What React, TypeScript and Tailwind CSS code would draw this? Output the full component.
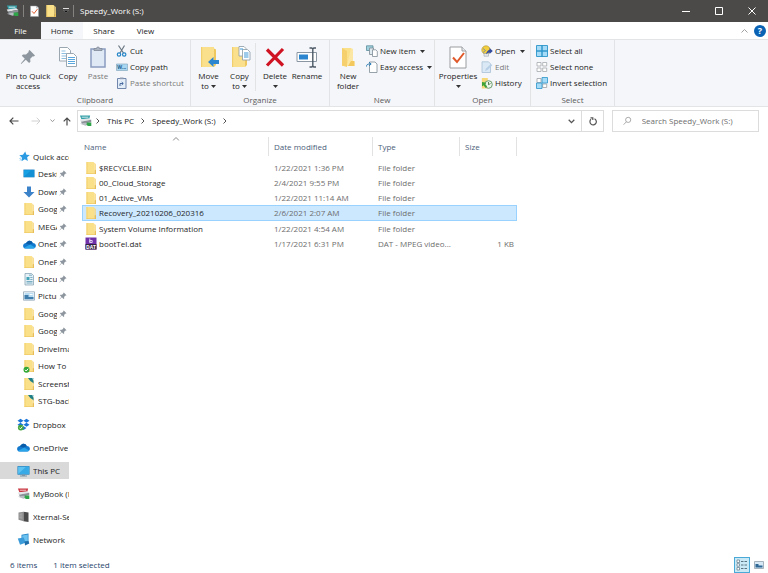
import { useState } from "react";
import type { ReactNode } from "react";
import clsx from "clsx";

type FileRow = {
  name: string;
  date: string;
  type: string;
  size: string;
};

type NavItem = {
  label: string;
  icon: ReactNode;
  pinned?: boolean;
};

const CaretIcon = () => (
  <svg viewBox="0 0 5 3" className="h-[3px] w-[5px] shrink-0" fill="#333">
    <path d="M0 0h5L2.5 3z" />
  </svg>
);

const FolderIcon = ({ children }: { children?: ReactNode }) => (
  <svg viewBox="0 0 12 14" className="h-3.5 w-3 shrink-0">
    <path d="M1.5 1h7l1 1v11h-8z" fill="#fbe08a" />
    <path d="M1.5 1h1v12h-1z" fill="#f3cf6b" />
    <path d="M9.5 9.500l1.500-1v4.500H1.500v-.6h8z" fill="#e9bf55" />
    <path d="M8.500 1l1 1v8l1.300-1.200V3z" fill="#f7d67a" />
    {children}
  </svg>
);

const TickFolderIcon = () => (
  <FolderIcon>
    <circle cx="3.500" cy="10.800" r="3" fill="#35a83a" />
    <path d="M2 10.800l1.200 1.200 2-2.300" stroke="#fff" strokeWidth="1" fill="none" />
  </FolderIcon>
);

const SyncFolderIcon = () => (
  <FolderIcon>
    <path d="M5 1h5.500v5.500L9 5 7.800 4.600 6.500 3z" fill="#1f7f88" />
    <path d="M9 1.200l1.800.2V4z" fill="#e8f5f5" />
  </FolderIcon>
);

const PinIcon = ({ className }: { className: string }) => (
  <svg viewBox="0 0 16 16" className={className}>
    <path
      d="M9.600 1l5.400 5.400-1.200 1-1-.2-2.600 2.600.2 3-1.300 1.200-3.300-3.300L1.200 15l-.4-.4 4-4.800L1.800 6.700 3 5.400l3 .2L8.700 3l-.2-1z"
      fill="#8d969e"
    />
  </svg>
);

const DriveIcon = ({ className, red }: { className: string; red?: boolean }) => (
  <svg viewBox="0 0 14 13" className={className}>
    <path d="M1 .5h11l-1 4H2.500z" fill={red ? "#c9343f" : "#35a0a8"} />
    <path d="M3 2.400h7" stroke="#fff" strokeWidth=".8" />
    <path d="M.8 5l10.200-1.400 2.200 1.600L2 7.200z" fill="#e3e6e9" />
    <path d="M2 7.200l11.200-2v2.600L3.500 9.800z" fill="#8c9298" />
    <path d="M1 9.500l6-1 5 1.200-5 2z" fill="#b8bec4" />
    <path d="M8.500 8h4.800v4H9.500L8 10.200z" fill="#2fa54a" />
  </svg>
);

const CloudIcon = () => (
  <svg viewBox="0 0 13 9" className="h-[9px] w-[13px] shrink-0">
    <path d="M4 2.300C5.200.3 8.600.2 9.700 3c2 0 3.200 1.300 3.200 2.800 0 1.600-1.200 2.700-2.700 2.700H3C1.300 8.500.1 7.500.1 5.900c0-1.500 1-2.500 2.300-2.700z" fill="#1279ce" />
    <path d="M4 2.300C5.200.3 8.600.2 9.700 3L6.800 4.800 2.400 3.200z" fill="#0b5ca8" />
    <path d="M1.200 7.800l6-3.300 5 3c-.6.700-1.200 1-2 1H3c-.8 0-1.300-.2-1.800-.7z" fill="#2aa5ea" />
  </svg>
);

const StarIcon = () => (
  <svg viewBox="0 0 12 12" className="h-[11px] w-[11px] shrink-0">
    <path d="M6.800.5l1.300 3.600 3.700.3-2.900 2.400.7 4.200-3.300-1.900-3.600 2 .7-3.900L.3 4.700l4-.6z" fill="#2a9be2" />
    <path d="M.5 8.200l2.500-.9M.8 10l2-.8" stroke="#6bbcee" strokeWidth=".8" />
  </svg>
);

const MonitorIcon = ({ small }: { small?: boolean }) => (
  <svg viewBox="0 0 13 12" className={small ? "h-3 w-3 shrink-0" : "h-3 w-[13px] shrink-0"}>
    <path d="M.5 1.200h12v8.400H.5z" fill="#0c78bd" />
    <path d="M1.100 1.800h10.800v7.200H1.100z" fill={small ? "#16a0e4" : "#5fc3f2"} />
    <path d="M1.100 9L9 1.800h2.900V9z" fill={small ? "#138fd3" : "#38aae5"} />
    {!small && <path d="M5 9.600h3v1h2v.8H3v-.8h2z" fill="#7d97a8" />}
  </svg>
);

const DownloadIcon = () => (
  <svg viewBox="0 0 12 12" className="h-3 w-3 shrink-0">
    <path d="M4 .5h4V6h3.500L6 11.500.500 6H4z" fill="#3b82c9" />
  </svg>
);

const DocumentsIcon = () => (
  <svg viewBox="0 0 12 14" className="h-3.5 w-3 shrink-0">
    <path d="M2 1.500h6.500L10.500 3.500V13H2z" fill="#e5f1f7" stroke="#7c9cae" strokeWidth=".7" />
    <path d="M3.500 5h3v3h-3z" fill="#41a3b8" />
    <path d="M6 3.200h3M7.300 5.500H9.500M7.300 7.500H9.500M3.500 9.500h6M3.500 11h6" stroke="#5e9db5" strokeWidth=".8" />
  </svg>
);

const PicturesIcon = () => (
  <svg viewBox="0 0 12 10" className="h-2.5 w-3 shrink-0">
    <path d="M.5.8h11v8.400H.5z" fill="#fff" stroke="#8fa5b5" strokeWidth=".8" />
    <path d="M1.500 1.800h9v6.400h-9z" fill="#b9dcf2" />
    <path d="M1.500 4h4v2h5v2.200h-9z" fill="#3f7dac" />
    <path d="M6.500 3.500h3" stroke="#fff" />
  </svg>
);

const DropboxIcon = () => (
  <svg viewBox="0 0 13 13" className="h-[13px] w-[13px] shrink-0">
    <path d="M3.500.8l3 2-3 2-3-2zM9.500.8l3 2-3 2-3-2zM3.500 4.800l3 2-3 2-3-2zM9.500 4.800l3 2-3 2-3-2zM6.500 8.300l3 1.800-3 2-3-2z" fill="#1a76d8" />
    <circle cx="3.800" cy="9.600" r="2.900" fill="#43a63c" />
    <path d="M2.400 9.600l1.100 1.200 1.800-2.200" stroke="#fff" strokeWidth=".9" fill="none" />
  </svg>
);

const ExternalDriveIcon = () => (
  <svg viewBox="0 0 13 13" className="h-[13px] w-[13px] shrink-0">
    <path d="M1.500 2.500l5-.8v9.600l-5-1.500z" fill="#8e8e8e" />
    <path d="M6.500 1.700l5 .8v9.500l-5-.7z" fill="#4a4a4a" />
    <path d="M2.400 4.300l3-.3M2.400 6l3 0M2.400 7.700l3 .4" stroke="#c4c4c4" strokeWidth=".6" />
  </svg>
);

const NetworkIcon = () => (
  <svg viewBox="0 0 13 13" className="h-[13px] w-[13px] shrink-0">
    <path d="M4.500 1.800l7-1.300v8.300l-7 .9z" fill="#2587c9" />
    <path d="M5.200 2.400l5.600-1v6.900l-5.600.7z" fill="#6cc2ef" />
    <path d="M.8 5.500l6-1 1.700 5.200L3 11.800z" fill="#3a9bd8" />
    <path d="M7.500 8.500l4-.6.8 2.600-4.300 2z" fill="#1d6da8" />
  </svg>
);

const DatFileIcon = () => (
  <svg viewBox="0 0 12 13" className="h-[13px] w-3 shrink-0">
    <path d="M.5.5h11v12H.5z" fill="#7030a8" />
    <path d="M.5 7h11v5.500H.5z" fill="#32203f" />
    <path d="M4.800 1.500v4M4.800 3.500h2.400v2H4.800z" stroke="#eadcf7" strokeWidth=".9" fill="none" />
    <text x="6" y="11.500" textAnchor="middle" fontSize="5" fontWeight="700" fill="#fff">
      DAT
    </text>
  </svg>
);

const CheckPageIcon = ({ className }: { className: string }) => (
  <svg viewBox="0 0 18 24" className={className}>
    <path d="M1 2h12l4 4v17H1z" fill="#fff" stroke="#9a9da1" />
    <path d="M13 2v4h4" fill="#e9ebee" stroke="#9a9da1" />
    <path d="M4 12.500l4 4.500 7-9" stroke="#e0592b" strokeWidth="2" fill="none" />
  </svg>
);

const CopyIcon = () => (
  <svg viewBox="0 0 20 24" className="h-6 w-5">
    <path d="M1.500 2.500h8l3 3V16h-11z" fill="#fff" stroke="#9aa7b0" />
    <path d="M3.500 6h4M3.500 8.500h7M3.500 11h7M3.500 13.500h5" stroke="#8fc0e2" />
    <path d="M8.500 8.500h7l3 3v10h-10z" fill="#fff" stroke="#9aa7b0" />
    <path d="M10 12.500h7M10 14.500h7M10 16.500h7M10 18.500h7" stroke="#5aa7de" />
  </svg>
);

const PasteIcon = () => (
  <svg viewBox="0 0 18 24" className="h-6 w-[18px]">
    <path d="M2 4h14v18H2z" fill="#dfe9f6" stroke="#8b9cc0" strokeWidth="1.500" />
    <path d="M5 5.500V3.500h2.500a1.500 1.500 0 013 0H13v2z" fill="#a9b2bf" stroke="#7f8897" strokeWidth=".8" />
  </svg>
);

const LargeFolder = ({ children }: { children?: ReactNode }) => (
  <svg viewBox="0 0 22 24" className="h-6 w-[22px]">
    <path d="M3 2h13v20H3z" fill="#fae08d" />
    <path d="M16 3.500l2 1V20l-2 2z" fill="#eec85f" />
    <path d="M3 2h1.200v20H3z" fill="#f1cf6e" />
    {children}
  </svg>
);

const MoveToIcon = () => (
  <LargeFolder>
    <path d="M10 17l5.500-5v3H21v4h-5.500v3z" fill="#2c85cf" />
  </LargeFolder>
);

const CopyToIcon = () => (
  <LargeFolder>
    <path d="M10 1.500h5l2 2V11h-7z" fill="#fff" stroke="#8c9aa5" strokeWidth=".8" />
    <path d="M13.500 4.500h5l2.500 2.500v8h-7.500z" fill="#fff" stroke="#8c9aa5" strokeWidth=".8" />
    <path d="M15 8h4.500M15 10h4.500M15 12h4.500M11 4h3" stroke="#3f97d6" />
  </LargeFolder>
);

const DeleteIcon = () => (
  <svg viewBox="0 0 20 24" className="h-6 w-5">
    <path d="M2 4.500l16 16M18 4L2 20.500" stroke="#cf1322" strokeWidth="3.200" />
  </svg>
);

const RenameIcon = () => (
  <svg viewBox="0 0 22 24" className="h-6 w-[22px]">
    <path d="M1 7.500h19.500v9H1z" fill="#fff" stroke="#8a97a3" />
    <path d="M3 9.500h9v5H3z" fill="#2c85cf" />
    <path d="M13.500 3h2.300l1 1 1-1h2.200M16.800 4v17M13.500 22h2.300l1-1 1 1h2.200" stroke="#4d5a66" strokeWidth="1.400" fill="none" />
  </svg>
);

const NewFolderIcon = () => (
  <svg viewBox="0 0 18 24" className="h-6 w-[18px]">
    <path d="M3 3h9v18H3z" fill="#fbe08a" />
    <path d="M3 3l5 3v16l-5-1.500z" fill="#f6d06c" />
    <path d="M12 3l2 1v12l1.500 1.500V21H8z" fill="#fbe6a3" />
    <path d="M12 16h3.500v5H9z" fill="#f3c95e" />
  </svg>
);

const CutIcon = () => (
  <svg viewBox="0 0 12 12" className="h-3 w-3">
    <path d="M2.500.5l5 7.500M8.500.5L4 8" stroke="#6a7884" strokeWidth="1.200" />
    <circle cx="3" cy="9.500" r="1.700" fill="none" stroke="#2585c8" strokeWidth="1.200" />
    <circle cx="8.200" cy="9.500" r="1.700" fill="none" stroke="#2585c8" strokeWidth="1.200" />
  </svg>
);

const CopyPathIcon = () => (
  <svg viewBox="0 0 12 12" className="h-3 w-3">
    <path d="M.5 3h11v6.500H.5z" fill="#a9d6f1" stroke="#86a9c0" strokeWidth=".7" />
    <text x="1.200" y="8.200" fontSize="5" fontWeight="700" fill="#1d5c8c">
      W...
    </text>
  </svg>
);

const PasteShortcutIcon = () => (
  <svg viewBox="0 0 12 12" className="h-3 w-3">
    <path d="M1.500 1.500h8.500v10H1.500z" fill="#e3edf8" stroke="#7086ad" />
    <path d="M4 .5h3.500v1.700H4z" fill="#8f9bb0" />
    <path d="M4 9V6.500h3M5.700 5l1.600 1.500L5.700 8" stroke="#47699f" fill="none" />
  </svg>
);

const NewItemIcon = () => (
  <svg viewBox="0 0 12 12" className="h-3 w-3">
    <path d="M.5.8h6.500v4.700H.5z" fill="#9fd0dd" stroke="#5c8b9b" strokeWidth=".8" />
    <path d="M3.500 3h4v6.500h-4z" fill="#dfe9f0" stroke="#7d8b96" strokeWidth=".8" />
    <path d="M6.500 4.800h3.200l1.600 1.500v5.200H6.500z" fill="#fff" stroke="#7d8b96" strokeWidth=".8" />
  </svg>
);

const EasyAccessIcon = () => (
  <svg viewBox="0 0 12 12" className="h-3 w-3">
    <path d="M3.500 1h5.500l2 2v8.500H3.500z" fill="#fff" stroke="#7d8b96" strokeWidth=".8" />
    <path d="M.5 5.500c0-1.800 1-2.500 3-2.500M3 1.200L5.200 3 3 4.800" stroke="#2a7db5" fill="none" />
  </svg>
);

const OpenIcon = () => (
  <svg viewBox="0 0 12 12" className="h-3 w-3">
    <circle cx="5" cy="5" r="4.200" fill="#f4cf3d" stroke="#a99132" strokeWidth=".6" />
    <path d="M2 3.500l2.500 2L2 7.500" stroke="#84929c" fill="none" />
    <path d="M3 8.500h4.500v2.700H3z" fill="#e6e9ec" stroke="#8994a0" strokeWidth=".5" />
    <path d="M5 9.500c.5-3 2-4.500 3.500-4.800V3L11.800 6 8.500 9V7.500C7 7.500 6 8.200 5 9.500z" fill="#344b9e" />
  </svg>
);

const EditIcon = () => (
  <svg viewBox="0 0 12 12" className="h-3 w-3">
    <path d="M1 .8h6.500l2 2V11.500H1z" fill="#dbe9f6" stroke="#a9c0d6" strokeWidth=".8" />
    <path d="M4 10l1-2.500L10 3l1.300 1.300L6.500 9z" fill="#b7cfe6" />
  </svg>
);

const HistoryIcon = () => (
  <svg viewBox="0 0 12 12" className="h-3 w-3">
    <path d="M.8 1h6v10.500h-6z" fill="#f6d879" />
    <circle cx="7.500" cy="7.500" r="3.800" fill="#eaf6e8" stroke="#6f9c70" />
    <path d="M7.500 5v2.700l2-1.200" stroke="#355f31" strokeWidth=".8" fill="none" />
    <path d="M1 5l4.500.8-1.300 1.300 2 2.500-1.700 1.200-2-2.600L1 9.500z" fill="#3da336" />
  </svg>
);

const SelectAllIcon = () => (
  <svg viewBox="0 0 12 12" className="h-3 w-3" fill="#a5dbf6" stroke="#2b94c9" strokeWidth=".9">
    <path d="M.5.5H6v5.500H.5zM6 .5h5.500v5.500H6zM.5 6H6v5.500H.5zM6 6h5.500v5.500H6z" />
  </svg>
);

const SelectNoneIcon = () => (
  <svg viewBox="0 0 12 12" className="h-3 w-3" fill="#fff" stroke="#9b9fa3" strokeWidth=".7">
    <path d="M1 1.500h4v3.500H1zM6.700 1.500h4v3.500h-4zM1 7h4v3.500H1zM6.700 7h4v3.500h-4z" />
  </svg>
);

const InvertIcon = () => (
  <svg viewBox="0 0 12 12" className="h-3 w-3" strokeWidth=".8">
    <path d="M1 1.500h4v4H1zM6.700 7h4v3.500h-4z" fill="#fff" stroke="#9b9fa3" />
    <path d="M6 .5h5.500v5.500H6zM.5 6H6v5.500H.5z" fill="#a5dbf6" stroke="#2b94c9" />
  </svg>
);

const quickAccess: NavItem[] = [
  { label: "Desktop", icon: <MonitorIcon small />, pinned: true },
  { label: "Downloads", icon: <DownloadIcon />, pinned: true },
  { label: "Google Drive", icon: <FolderIcon />, pinned: true },
  { label: "MEGA", icon: <FolderIcon />, pinned: true },
  { label: "OneDrive", icon: <CloudIcon />, pinned: true },
  { label: "OneFile", icon: <FolderIcon />, pinned: true },
  { label: "Documents", icon: <DocumentsIcon />, pinned: true },
  { label: "Pictures", icon: <PicturesIcon />, pinned: true },
  { label: "Google Docs", icon: <FolderIcon />, pinned: true },
  { label: "Google Photos", icon: <FolderIcon />, pinned: true },
  { label: "DriveImages", icon: <FolderIcon /> },
  { label: "How To", icon: <TickFolderIcon /> },
  { label: "Screenshots", icon: <SyncFolderIcon /> },
  { label: "STG-backups", icon: <SyncFolderIcon /> },
];

const locations: NavItem[] = [
  { label: "Dropbox", icon: <DropboxIcon /> },
  { label: "OneDrive", icon: <CloudIcon /> },
  { label: "This PC", icon: <MonitorIcon /> },
  { label: "MyBook (M:)", icon: <DriveIcon red className="h-3 w-[13px] shrink-0" /> },
  { label: "Xternal-Seagate", icon: <ExternalDriveIcon /> },
  { label: "Network", icon: <NetworkIcon /> },
];

const files: FileRow[] = [
  { name: "$RECYCLE.BIN", date: "1/22/2021 1:36 PM", type: "File folder", size: "" },
  { name: "00_Cloud_Storage", date: "2/4/2021 9:55 PM", type: "File folder", size: "" },
  { name: "01_Active_VMs", date: "1/22/2021 11:14 AM", type: "File folder", size: "" },
  { name: "Recovery_20210206_020316", date: "2/6/2021 2:07 AM", type: "File folder", size: "" },
  { name: "System Volume Information", date: "1/22/2021 4:54 AM", type: "File folder", size: "" },
  { name: "bootTel.dat", date: "1/17/2021 6:31 PM", type: "DAT - MPEG video...", size: "1 KB" },
];

const RibbonGroup = ({
  label,
  className,
  children,
}: {
  label: string;
  className: string;
  children: ReactNode;
}) => (
  <section className={clsx("flex shrink-0 flex-col border-r border-[#e2e3e5]", className)}>
    <div className="flex flex-1 items-start pt-[3px]">{children}</div>
    <h2 className="text-center leading-3 text-[#5a5a5a]">{label}</h2>
  </section>
);

const BigButton = ({
  lines,
  icon,
  className,
  caret,
  disabled,
}: {
  lines: string[];
  icon: ReactNode;
  className: string;
  caret?: boolean;
  disabled?: boolean;
}) => (
  <button
    disabled={disabled}
    className={clsx(
      "flex shrink-0 flex-col items-center whitespace-nowrap leading-[10px]",
      disabled && "text-[#7a7a7a]",
      className
    )}
  >
    <span className="flex h-7 items-center">{icon}</span>
    <span>{lines[0]}</span>
    <span className="flex h-2.5 items-center gap-0.5">
      {lines[1]}
      {caret && <CaretIcon />}
    </span>
  </button>
);

const SmallButton = ({
  label,
  icon,
  caret,
  disabled,
}: {
  label: string;
  icon: ReactNode;
  caret?: boolean;
  disabled?: boolean;
}) => (
  <button
    disabled={disabled}
    className={clsx(
      "flex h-4 items-center whitespace-nowrap",
      disabled && "text-[#7a7a7a]"
    )}
  >
    {icon}
    <span className="mr-1 ml-0.5">{label}</span>
    {caret && <CaretIcon />}
  </button>
);

const TitleBar = () => (
  <header className="flex h-[22px] items-center bg-[#4b4a48] pl-1.5 text-white">
    <DriveIcon className="h-3 w-[13px]" />
    <span className="ml-1 h-3 border-l border-[#85837f]" />
    <button aria-label="Properties" className="ml-1.5">
      <CheckPageIcon className="h-3 w-[9px]" />
    </button>
    <button aria-label="New folder" className="ml-1.5">
      <FolderIcon />
    </button>
    <button aria-label="Customize toolbar" className="ml-1.5">
      <svg viewBox="0 0 6 6" className="h-1.5 w-1.5">
        <path d="M0 .5h6" stroke="#ddd" />
        <path d="M.5 2.500h5L3 5z" fill="#111" stroke="#bbb" strokeWidth=".3" />
      </svg>
    </button>
    <span className="ml-1 h-3 border-l border-[#85837f]" />
    <h1 className="ml-1.5 flex-1">Speedy_Work (S:)</h1>
    <button aria-label="Minimize" className="flex w-[33px] justify-center">
      <svg viewBox="0 0 8 8" className="h-2 w-2" stroke="#fff">
        <path d="M0 4.500h8" />
      </svg>
    </button>
    <button aria-label="Maximize" className="flex w-[33px] justify-center">
      <svg viewBox="0 0 8 8" className="h-2 w-2" stroke="#fff" fill="none">
        <path d="M.5.5h7v7h-7z" />
      </svg>
    </button>
    <button aria-label="Close" className="flex w-[33px] justify-center">
      <svg viewBox="0 0 8 8" className="h-2 w-2" stroke="#fff">
        <path d="M.5.5l7 7M7.500.5l-7 7" />
      </svg>
    </button>
  </header>
);

const Tabs = () => (
  <nav className="flex h-[17px] items-stretch bg-white">
    <button className="w-[41px] bg-[#4b4a48] text-white">File</button>
    <button className="w-[42px] bg-[#f5f6f9]">Home</button>
    <button className="w-[42px]">Share</button>
    <button className="w-[41px]">View</button>
    <div className="ml-auto flex items-center gap-1.5 pr-0.5">
      <button aria-label="Minimize the ribbon">
        <svg viewBox="0 0 7 4" className="h-1 w-[7px]" stroke="#a0a0a0" fill="none">
          <path d="M.5 3.500l3-3 3 3" />
        </svg>
      </button>
      <button
        aria-label="Help"
        className="flex h-3 w-3 items-center justify-center rounded-full bg-[#0a62b5] text-[9px] font-bold text-white"
      >
        ?
      </button>
    </div>
  </nav>
);

const Ribbon = () => (
  <div className="flex h-[68px] overflow-hidden border-y border-[#e3e4e6] bg-[#f5f6f9]">
    <RibbonGroup label="Clipboard" className="w-[191px]">
      <BigButton className="w-14" lines={["Pin to Quick", "access"]} icon={<PinIcon className="h-4 w-4" />} />
      <BigButton className="w-6" lines={["Copy"]} icon={<CopyIcon />} />
      <BigButton className="w-9" lines={["Paste"]} icon={<PasteIcon />} disabled />
      <div className="flex flex-col">
        <SmallButton label="Cut" icon={<CutIcon />} />
        <SmallButton label="Copy path" icon={<CopyPathIcon />} />
        <SmallButton label="Paste shortcut" icon={<PasteShortcutIcon />} disabled />
      </div>
    </RibbonGroup>
    <RibbonGroup label="Organize" className="w-[139px]">
      <BigButton className="ml-0.5 w-[31px]" lines={["Move", "to"]} icon={<MoveToIcon />} caret />
      <BigButton className="w-[31px]" lines={["Copy", "to"]} icon={<CopyToIcon />} caret />
      <span className="h-12 border-l border-[#e2e3e5]" />
      <BigButton className="ml-[3px] w-8" lines={["Delete"]} icon={<DeleteIcon />} caret />
      <BigButton className="w-8" lines={["Rename"]} icon={<RenameIcon />} />
    </RibbonGroup>
    <RibbonGroup label="New" className="w-[105px]">
      <BigButton className="w-9" lines={["New", "folder"]} icon={<NewFolderIcon />} />
      <div className="flex flex-col">
        <SmallButton label="New item" icon={<NewItemIcon />} caret />
        <SmallButton label="Easy access" icon={<EasyAccessIcon />} caret />
      </div>
    </RibbonGroup>
    <RibbonGroup label="Open" className="w-[96px]">
      <BigButton className="w-[46px]" lines={["Properties"]} icon={<CheckPageIcon className="h-6 w-[18px]" />} caret />
      <div className="flex flex-col">
        <SmallButton label="Open" icon={<OpenIcon />} caret />
        <SmallButton label="Edit" icon={<EditIcon />} disabled />
        <SmallButton label="History" icon={<HistoryIcon />} />
      </div>
    </RibbonGroup>
    <RibbonGroup label="Select" className="w-[84px]">
      <div className="flex flex-col pl-[5px]">
        <SmallButton label="Select all" icon={<SelectAllIcon />} />
        <SmallButton label="Select none" icon={<SelectNoneIcon />} />
        <SmallButton label="Invert selection" icon={<InvertIcon />} />
      </div>
    </RibbonGroup>
  </div>
);

const Chevron = () => (
  <svg viewBox="0 0 4 6" className="h-1.5 w-1" stroke="#555" fill="none">
    <path d="M.5.5L3 3 .5 5.500" />
  </svg>
);

const AddressBar = () => {
  const [query, setQuery] = useState("");

  return (
    <div className="flex h-7 items-center pr-[9px]">
      <div className="flex w-[77px] items-center pl-[9px]">
        <button aria-label="Back">
          <svg viewBox="0 0 10 8" className="h-2 w-2.5" stroke="#4a4a4a" strokeWidth="1.200" fill="none">
            <path d="M9.500 4H1M4.300.7L1 4l3.300 3.300" />
          </svg>
        </button>
        <button aria-label="Forward" className="ml-3">
          <svg viewBox="0 0 10 8" className="h-2 w-2.5" stroke="#d0d0d0" fill="none">
            <path d="M.5 4H9M5.700.7L9 4 5.700 7.300" />
          </svg>
        </button>
        <button aria-label="Recent locations" className="ml-[9px]">
          <svg viewBox="0 0 5 4" className="h-1 w-[5px]" stroke="#999" fill="none">
            <path d="M.5.5l2 2.200 2-2.200" />
          </svg>
        </button>
        <button aria-label="Up" className="ml-2">
          <svg viewBox="0 0 8 9" className="h-[9px] w-2" stroke="#4a4a4a" strokeWidth="1.200" fill="none">
            <path d="M4 8.500V1M.7 4.300L4 1l3.300 3.300" />
          </svg>
        </button>
      </div>
      <div className="flex h-[22px] flex-1 items-center border border-[#dcdcdc]">
        <DriveIcon className="ml-px h-3 w-[13px]" />
        <nav className="ml-1 flex flex-1 items-center gap-[7px]">
          <Chevron />
          <button>This PC</button>
          <Chevron />
          <button>Speedy_Work (S:)</button>
          <Chevron />
        </nav>
        <button aria-label="Previous locations" className="flex w-5 justify-center">
          <svg viewBox="0 0 7 5" className="h-[5px] w-[7px]" stroke="#555" strokeWidth="1.300" fill="none">
            <path d="M.7.8l2.800 2.800L6.300.8" />
          </svg>
        </button>
        <button
          aria-label="Refresh"
          className="flex h-full w-[22px] items-center justify-center border-l border-[#dcdcdc]"
        >
          <svg viewBox="0 0 8 9" className="h-[9px] w-2" stroke="#555" strokeWidth="1.200" fill="none">
            <path d="M5.500 1.800A3.200 3.200 0 112 2.300M1.500.8h2.300v2.300" />
          </svg>
        </button>
      </div>
      <label className="ml-2 flex h-[22px] w-[147px] items-center border border-[#dcdcdc] pl-2.5">
        <svg viewBox="0 0 10 10" className="h-2.5 w-2.5" stroke="#888" strokeWidth=".8" fill="none">
          <circle cx="6" cy="3.700" r="3" />
          <path d="M3.800 6L.7 9.300" />
        </svg>
        <input
          type="text"
          aria-label="Search"
          placeholder="Search Speedy_Work (S:)"
          value={query}
          onChange={(e) => setQuery(e.target.value)}
          className="ml-2.5 w-full min-w-0 outline-none placeholder:text-[#6d6d6d]"
        />
      </label>
    </div>
  );
};

const Sidebar = () => (
  <aside className="w-[69px] shrink-0 overflow-hidden pt-[13px]">
    <ul className="grid h-[262px] auto-rows-fr">
      <li className="flex items-center gap-[3px] pl-[19px]">
        <StarIcon />
        <a href="#quick" className="overflow-hidden whitespace-nowrap">
          Quick access
        </a>
      </li>
      {quickAccess.map((item) => (
        <li key={item.label} className="flex min-h-0 items-center pl-[23px]">
          <span className="flex w-[15px] shrink-0">{item.icon}</span>
          <a
            href="#folder"
            className={clsx("overflow-hidden whitespace-nowrap", item.pinned ? "w-[19px]" : "flex-1")}
          >
            {item.label}
          </a>
          {item.pinned && <PinIcon className="ml-0.5 h-2 w-2 shrink-0" />}
        </li>
      ))}
    </ul>
    <ul className="mt-[3px]">
      {locations.map((item) => (
        <li key={item.label} className="flex h-[23px] items-center">
          <a
            href="#location"
            className={clsx(
              "flex h-[17px] w-full items-center pl-[17px]",
              item.label === "This PC" && "bg-[#d9d9d9]"
            )}
          >
            <span className="flex w-4 shrink-0">{item.icon}</span>
            <span className="overflow-hidden whitespace-nowrap">{item.label}</span>
          </a>
        </li>
      ))}
    </ul>
  </aside>
);

const HeaderCell = ({ label, sorted }: { label: string; sorted?: boolean }) => (
  <th className="relative h-[25px] p-0 text-left align-top font-normal text-[#4c607a]">
    {sorted && (
      <svg
        viewBox="0 0 7 4"
        className="absolute top-0.5 left-1/2 h-1 w-[7px] -translate-x-1/2"
        stroke="#888"
        fill="none"
      >
        <path d="M.5 3.500l3-3 3 3" />
      </svg>
    )}
    <span
      className={clsx(
        "mt-0.5 flex h-[19px] items-center border-r border-[#e2e2e2]",
        sorted ? "pl-0.5" : "pl-[5px]"
      )}
    >
      {label}
    </span>
  </th>
);

const FileTable = () => {
  const [selected, setSelected] = useState("Recovery_20210206_020316");

  return (
    <main className="flex-1 pl-[13px]">
      <table className="w-[435px] table-fixed border-collapse whitespace-nowrap">
        <colgroup>
          <col className="w-[187px]" />
          <col className="w-[104px]" />
          <col className="w-[87px]" />
          <col className="w-[57px]" />
        </colgroup>
        <thead>
          <tr>
            <HeaderCell label="Name" sorted />
            <HeaderCell label="Date modified" />
            <HeaderCell label="Type" />
            <HeaderCell label="Size" />
          </tr>
        </thead>
        <tbody className="text-[#6d6d6d]">
          {files.map((file) => (
            <tr
              key={file.name}
              onClick={() => setSelected(file.name)}
              className={
                file.name === selected
                  ? "h-4 bg-[#cce8ff] outline outline-1 -outline-offset-1 outline-[#99d1ff]"
                  : "h-[15px]"
              }
            >
              <td className="p-0">
                <span className="flex h-[15px] items-center gap-0.5 pl-[3px] text-[#1f1f1f]">
                  {file.name.endsWith(".dat") ? <DatFileIcon /> : <FolderIcon />}
                  {file.name}
                </span>
              </td>
              <td className="p-0 pl-[5px]">{file.date}</td>
              <td className="p-0 pl-[5px]">{file.type}</td>
              <td className="p-0 pr-[3px] text-right">{file.size}</td>
            </tr>
          ))}
        </tbody>
      </table>
    </main>
  );
};

const StatusBar = () => (
  <footer className="flex h-[19px] items-center gap-4 pt-0.5 pr-1 pl-2.5 text-[#26436b]">
    <span>6 items</span>
    <span className="flex-1">1 item selected</span>
    <div className="flex items-center gap-1">
      <button aria-label="Details view" className="border border-[#4aa9d6] bg-[#c9e9f7] p-px">
        <svg viewBox="0 0 12 12" className="h-3 w-3" stroke="#4d6575" strokeWidth=".9" fill="#fff">
          <path d="M1 1h2.500v2.500H1zM1 4.700h2.500v2.500H1zM1 8.500h2.500V11H1z" strokeWidth=".6" />
          <path d="M5 2.500h2.500M8.500 2.500H11M5 6h2.500M8.500 6H11M5 9.500h2.500M8.500 9.500H11" />
        </svg>
      </button>
      <button aria-label="Large icons view">
        <svg viewBox="0 0 10 8" className="h-2 w-2.5">
          <path d="M.5.5h9v7h-9z" fill="#d7e9f4" stroke="#94a2ad" strokeWidth=".8" />
          <path d="M1.500 3h3v1.500h4v2h-7z" fill="#2e6793" />
        </svg>
      </button>
    </div>
  </footer>
);

const App = () => (
  <div className="flex min-h-screen flex-col bg-white font-['Open_Sans','Noto_Sans',sans-serif] text-[8px] leading-3 text-[#222]">
    <TitleBar />
    <Tabs />
    <Ribbon />
    <AddressBar />
    <div className="flex flex-1">
      <Sidebar />
      <FileTable />
    </div>
    <StatusBar />
  </div>
);

export default App;
